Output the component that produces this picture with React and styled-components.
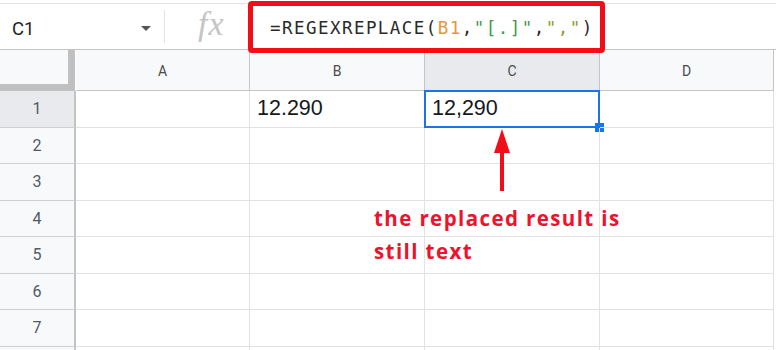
import React from "react";
import styled, { createGlobalStyle } from "styled-components";

const Global = createGlobalStyle`
  html, body { margin: 0; padding: 0; background: #fff; }
  body { width: 776px; height: 350px; overflow: hidden; font-family: Roboto, "Liberation Sans", Arial, sans-serif; }
`;

const Page = styled.div`
  position: relative;
  width: 776px;
  height: 350px;
  padding-top: 3px;
  box-sizing: border-box;
  overflow: hidden;
`;

const Toolbar = styled.div`
  position: relative;
  display: flex;
  align-items: center;
  height: 47px;
  box-sizing: border-box;
  border-top: 1px solid #e3e3e3;
  border-bottom: 1px solid #c4c4c4;
`;

const NameBox = styled.div`
  display: flex;
  align-items: center;
  justify-content: space-between;
  width: 164px;
  padding: 4px 13px 0 12px;
  box-sizing: border-box;
  font-size: 18.5px;
  color: #1f1f1f;
`;

const Caret = styled.span`
  width: 0;
  height: 0;
  margin-top: 0px;
  border-left: 5px solid transparent;
  border-right: 5px solid transparent;
  border-top: 5px solid #555;
`;

const Divider = styled.div`
  width: 1px;
  height: 33px;
  background: #e3e3e3;
`;

const Fx = styled.div`
  width: 105px;
  padding-left: 33px;
  box-sizing: border-box;
  font-family: "Liberation Serif", "DejaVu Serif", serif;
  font-style: italic;
  font-size: 34px;
  color: #c4c4c4;
  margin-top: -6px;
  letter-spacing: 1px;
`;

const Formula = styled.div`
  font-family: "DejaVu Sans Mono", "Liberation Mono", monospace;
  font-size: 17.5px;
  letter-spacing: 1.45px;
  color: #2a2a2a;
  margin-top: 2px;
  white-space: pre;
`;

const Tok = styled.span`
  color: ${(p) => p.$c};
`;

const RedFrame = styled.div`
  position: absolute;
  left: 248px;
  top: -3px;
  width: 357px;
  height: 52px;
  box-sizing: border-box;
  border: 5px solid #f20d18;
  border-radius: 4px;
  pointer-events: none;
`;

const Grid = styled.div`
  display: grid;
  grid-template-columns: 76px 174px 175px 175px 174px;
  grid-template-rows: 41px repeat(8, 36.5px);
`;

const Corner = styled.div`
  box-sizing: border-box;
  background: #f8f9fa;
  border-right: 7px solid #c0c0c0;
  border-bottom: 7px solid #c0c0c0;
  width: 75px;
`;

const ColHead = styled.div`
  display: flex;
  align-items: center;
  justify-content: center;
  box-sizing: border-box;
  background: ${(p) => (p.$active ? "#e8eaed" : "#f8f9fa")};
  border-right: 1px solid #c4c4c4;
  border-bottom: 1px solid #c4c4c4;
  font-size: 14px;
  color: #4a4a4a;
  padding-top: 2px;
`;

const RowHead = styled.div`
  display: flex;
  align-items: center;
  justify-content: center;
  box-sizing: border-box;
  background: ${(p) => (p.$active ? "#e8eaed" : "#f8f9fa")};
  border-right: 2px solid #c4c4c4;
  border-bottom: 1px solid #cfcfcf;
  font-size: 16px;
  color: #505a66;
`;

const Cell = styled.div`
  position: relative;
  display: flex;
  align-items: center;
  box-sizing: border-box;
  padding-left: 7px;
  border-right: 1px solid #e2e2e2;
  border-bottom: 1px solid #e2e2e2;
  font-family: "Liberation Sans", Arial, sans-serif;
  font-size: 21.5px;
  color: #141820;

  ${(p) =>
    p.$selected &&
    `
    &::before {
      content: "";
      position: absolute;
      left: -1px; top: -1px; right: -1px; bottom: -1px;
      border: 2px solid #1a73e8;
    }
    &::after {
      content: "";
      position: absolute;
      right: -5px; bottom: -5px;
      width: 9px; height: 9px;
      background: #1a73e8;
    }
  `}
`;

const Arrow = styled.svg`
  position: absolute;
  left: 492px;
  top: 129px;
`;

const Note = styled.div`
  position: absolute;
  left: 374px;
  top: 202px;
  width: 300px;
  font-family: "Open Sans", "Liberation Sans", sans-serif;
  font-weight: 700;
  font-size: 20.5px;
  letter-spacing: 1.4px;
  line-height: 33px;
  color: #f0112c;
`;

const cols = ["A", "B", "C", "D"];
const rows = [1, 2, 3, 4, 5, 6, 7, 8];

export default function App() {
  return (
    <Page>
      <Global />
      <Toolbar>
        <NameBox>
          <span>C1</span>
          <Caret />
        </NameBox>
        <Divider />
        <Fx>fx</Fx>
        <Formula>
          =REGEXREPLACE(<Tok $c="#e9963a">B1</Tok>,<Tok $c="#3f9a52">"[.]"</Tok>,<Tok $c="#8c9a2e">","</Tok>)
        </Formula>
        <RedFrame />
      </Toolbar>
      <Grid>
        <Corner />
        {cols.map((c) => (
          <ColHead key={c} $active={c === "C"}>{c}</ColHead>
        ))}
        {rows.map((r) => (
          <React.Fragment key={r}>
            <RowHead $active={r === 1}>{r < 8 ? r : ""}</RowHead>
            <Cell />
            <Cell>{r === 1 ? "12.290" : ""}</Cell>
            <Cell $selected={r === 1}>{r === 1 ? "12,290" : ""}</Cell>
            <Cell />
          </React.Fragment>
        ))}
      </Grid>
      <Arrow width="20" height="64" viewBox="0 0 20 64">
        <polygon points="10,0 18,24 2,24" fill="#f20d18" />
        <rect x="8" y="20" width="4" height="42" fill="#f20d18" />
      </Arrow>
      <Note>
        the replaced result is
        <br />
        still text
      </Note>
    </Page>
  );
}
